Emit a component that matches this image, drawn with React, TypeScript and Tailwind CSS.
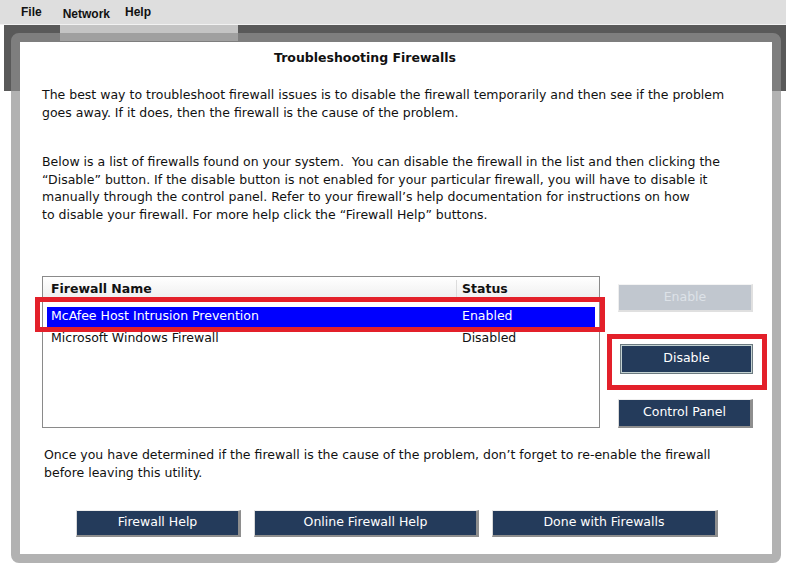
const font = { fontFamily: '"DejaVu Sans", Verdana, sans-serif' };

function NavyButton({ label, className = '' }: { label: string; className?: string }) {
  return (
    <button
      className={`h-[27px] bg-[#243b5b] text-white text-[12.5px] border-l border-t border-l-[#d8d8d8] border-t-[#eeeeee] border-r-[3px] border-b-[2px] border-r-[#8e8e8e] border-b-[#8e8e8e] ${className}`}
    >
      {label}
    </button>
  );
}

export default function App() {
  return (
    <div className="relative w-[794px] h-[570px] bg-white overflow-hidden" style={font}>
      {/* menu bar */}
      <div
        className="w-[786px] h-[25px] bg-[#dedede] flex items-center text-[12px] font-bold text-[#111] border-b border-b-[#f2f2f2]"
        style={{ fontFamily: '"Liberation Sans", Arial, sans-serif' }}
      >
        <span className="ml-[21px]">File</span>
        <span className="ml-[21px] mt-[3px]">Network</span>
        <span className="ml-[15px]">Help</span>
      </div>
      {/* dark backdrop band */}
      <div className="ml-[4px] w-[782px] h-[66px] bg-[#595959]">
        <div className="ml-[56px] w-[178px] h-[16px] bg-[#c4c4c4]" />
      </div>

      {/* dialog */}
      <div className="absolute left-[11px] top-[33px] w-[770px] h-[530px] rounded-[8px] border-[9px] border-[rgba(144,144,144,0.69)] bg-clip-padding">
        <div className="w-full h-full bg-white pl-[22px] pr-[8px] text-[12.5px] text-[#111]">
          <div className="pt-[7px] ml-[232px] font-bold leading-[18px]">Troubleshooting Firewalls</div>

          <p className="mt-[19px] leading-[18px] whitespace-nowrap">
            The best way to troubleshoot firewall issues is to disable the firewall temporarily and then see if the problem
            <br />
            goes away. If it does, then the firewall is the cause of the problem.
          </p>

          <p className="mt-[31px] leading-[17.7px] whitespace-pre">
            {'Below is a list of firewalls found on your system.  You can disable the firewall in the list and then clicking the\n'}
            {'“Disable” button. If the disable button is not enabled for your particular firewall, you will have to disable it\n'}
            {'manually through the control panel. Refer to your firewall’s help documentation for instructions on how\n'}
            {'to disable your firewall. For more help click the “Firewall Help” buttons.'}
          </p>

          <div className="mt-[52px] flex gap-[18px]">
            {/* firewall list */}
            <div className="w-[558px] h-[152px] shrink-0 border border-[#8a8a8a] px-[4px]">
              <div className="h-[25px] flex items-center font-bold bg-gradient-to-b from-white to-[#ececec] -mx-[4px] px-[8px]">
                <span className="w-[406px] border-r border-r-[#dcdcdc]">Firewall Name</span>
                <span className="pl-[5px]">Status</span>
              </div>
              <div className="relative mt-[5px] h-[20px] flex items-center bg-[#0000ff] text-white px-[4px]">
                <span className="w-[411px]">McAfee Host Intrusion Prevention</span>
                <span>Enabled</span>
                <div className="absolute -left-[12px] -right-[10px] -top-[10px] -bottom-[5px] border-[5px] border-[#e3202a]" />
              </div>
              <div className="mt-[2px] h-[20px] flex items-center px-[4px]">
                <span className="w-[411px]">Microsoft Windows Firewall</span>
                <span>Disabled</span>
              </div>
            </div>

            {/* action buttons */}
            <div className="w-[135px] shrink-0 flex flex-col">
              <button className="mt-[8px] h-[28px] bg-[#c1c7cf] text-[#dde2e8] text-[12.5px] border-l border-t border-l-[#eeeeee] border-t-[#f4f4f4] border-r-[2px] border-b-[2px] border-r-[#e0e0e0] border-b-[#e0e0e0]">
                Enable
              </button>
              <div className="relative mt-[32px] ml-[2px] w-[133px]">
                <button className="w-full h-[30px] bg-[#243b5b] text-white text-[12.5px] border border-[#6c7a80] shadow-[inset_0_0_0_1px_#c4d2d2]">
                  Disable
                </button>
                <div className="absolute -left-[13px] -right-[14px] -top-[10px] -bottom-[16px] border-[5px] border-[#e3202a]" />
              </div>
              <NavyButton label="Control Panel" className="mt-[25px] h-[29px]" />
            </div>
          </div>

          <p className="mt-[18px] ml-[2px] leading-[18px] whitespace-nowrap">
            Once you have determined if the firewall is the cause of the problem, don’t forget to re-enable the firewall
            <br />
            before leaving this utility.
          </p>

          <div className="mt-[28px] ml-[34px] flex gap-[13px]">
            <NavyButton label="Firewall Help" className="w-[165px]" />
            <NavyButton label="Online Firewall Help" className="w-[225px]" />
            <NavyButton label="Done with Firewalls" className="w-[226px]" />
          </div>
        </div>
      </div>
    </div>
  );
}
